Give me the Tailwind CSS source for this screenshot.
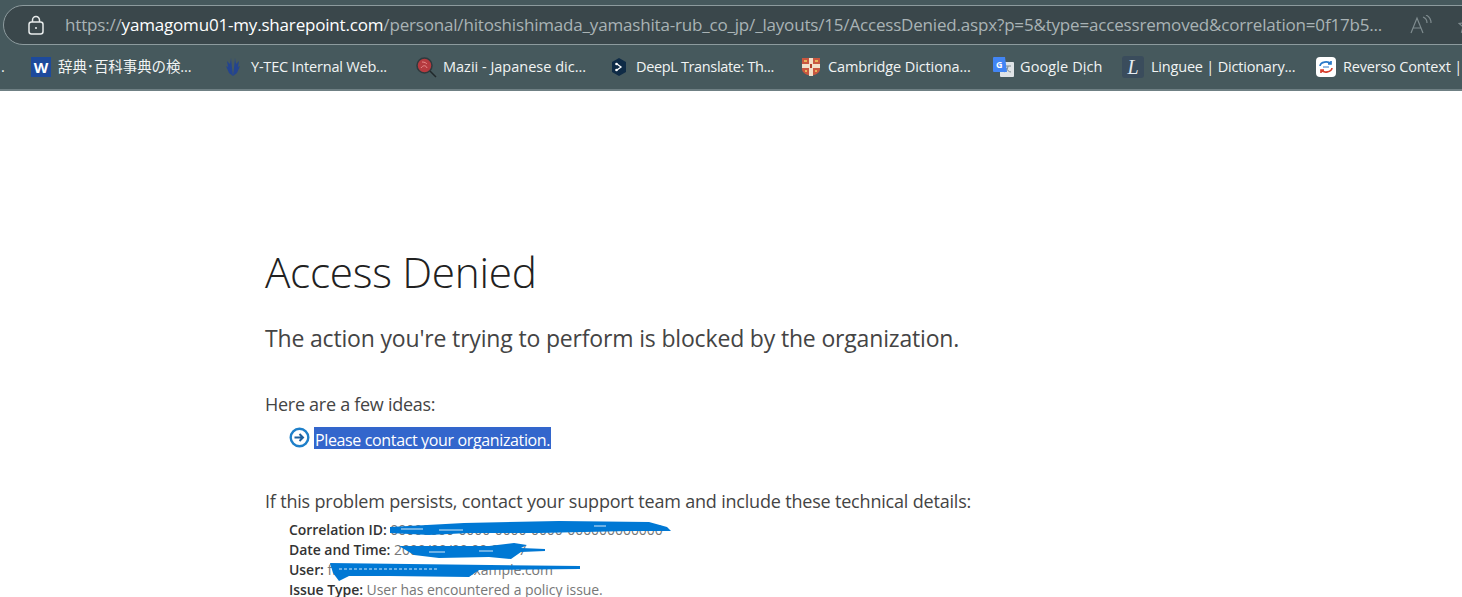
<!doctype html>
<html>
<head>
<meta charset="utf-8"/>
<script src="https://cdn.jsdelivr.net/npm/@tailwindcss/browser@4"></script>
</head>
<body class="bg-white overflow-hidden h-[597px] font-['Open_Sans','Noto_Sans_CJK_JP',sans-serif]">
	<!-- browser toolbar -->
	<div class="h-[91px] bg-[#46595d] border-b-2 border-[#6f8084] pt-[5px] overflow-hidden">
		<div class="h-[40px] ml-[3px] w-[1480px] rounded-l-[20px] border border-[#8d9b9e] bg-[#3a474b] flex items-center relative">
			<svg class="ml-[23px] w-[18px] h-[20px]" viewBox="0 0 18 20" fill="none" stroke="#e8ecec" stroke-width="1.5">
				<rect x="2" y="7" width="14" height="12" rx="2.5"/>
				<path d="M5.5 7V5a3.5 3.5 0 0 1 7 0v2"/>
				<circle cx="9" cy="13" r="1" fill="#e8ecec" stroke="none"/>
			</svg>
			<div class="ml-[20px] text-[17px] tracking-[-0.18px] whitespace-nowrap text-[#a9b3b5]">https://<span class="text-white">yamagomu01-my.sharepoint.com</span>/personal/hitoshishimada_yamashita-rub_co_jp/_layouts/15/AccessDenied.aspx?p=5&amp;type=accessremoved&amp;correlation=0f17b5...</div>
			<!-- read aloud + favourite star -->
			<svg class="absolute left-[1406px] top-[9px] w-[22px] h-[20px]" viewBox="0 0 22 20" fill="none" stroke="#7f8c8f" stroke-width="1.2">
				<path d="M1 18L7 3l6 15M3.2 13h7.6"/>
				<path d="M13 2c2.5 1 4 3 4 6M16 0c3 1.500 5 4.500 5 8"/>
			</svg>
			<svg class="absolute left-[1454px] top-[11px] w-[16px] h-[16px]" viewBox="0 0 16 16" fill="none" stroke="#7f8c8f" stroke-width="1.2"><path d="M8 1l2 5 5 .4-4 3.400 1.300 5.200L8 12l-4.300 3L5 9.800 1 6.400 6 6z"/></svg>
		</div>
		<div class="flex items-center h-[44px] text-[14.500px] tracking-[-0.2px] text-[#f1f4f4] whitespace-nowrap">
			<span class="w-[31px] shrink-0 pl-[1px]">.</span>
			<div class="flex items-center shrink-0 w-[194px]">
				<div class="w-[20px] h-[20px] bg-[#1d4a9c] text-white text-[15px] font-bold flex items-center justify-center">W</div>
				<span class="ml-[7px] text-[14.500px] tracking-[-0.1px]">辞典･百科事典の検...</span>
			</div>
			<div class="flex items-center shrink-0 w-[190px]">
				<svg class="w-[16px] h-[20px]" viewBox="0 0 16 20" fill="#24448f"><path d="M6 1l1 10 1 8-4-3-3-7 2 1-1-6 3 3zM10 1L9 11l-1 8 4-3 3-7-2 1 1-6-3 3z"/></svg>
				<span class="ml-[10px]">Y-TEC Internal Web...</span>
			</div>
			<div class="flex items-center shrink-0 w-[195px]">
				<svg class="w-[22px] h-[22px]" viewBox="0 0 22 22" fill="none"><circle cx="9.500" cy="9.500" r="7.500" fill="#b53a3f" stroke="#2f3a3e" stroke-width="1.500"/><path d="M7 6c3 0 4 1 5 2M6 12c2-3 5-3 6 0" stroke="#e88a8a"/><path d="M15 15l6 6" stroke="#20282b" stroke-width="1.500"/></svg>
				<span class="ml-[6px] tracking-[0px]">Mazii - Japanese dic...</span>
			</div>
			<div class="flex items-center shrink-0 w-[192px]">
				<svg class="w-[18px] h-[20px]" viewBox="0 0 18 20"><path d="M9 1l7 4v10l-7 4-7-4V5z" fill="#0f2b46"/><path d="M7 7l4 3-4 3" fill="none" stroke="#fff" stroke-width="1.300"/><circle cx="6.500" cy="7" r="1.300" fill="#fff"/><circle cx="6.500" cy="13" r="1.300" fill="#fff"/></svg>
				<span class="ml-[8px] tracking-[-0.35px]">DeepL Translate: Th...</span>
			</div>
			<div class="flex items-center shrink-0 w-[191px]">
				<svg class="w-[18px] h-[20px]" viewBox="0 0 18 20"><path d="M0 1h18v11c0 4-5 6-9 7-4-1-9-3-9-7z" fill="#c9573f"/><path d="M7 1h4v18H7zM0 7h18v4H0z" fill="#f2dfc8"/><path d="M8 7h2v4H8z" fill="#b0402c"/><path d="M2 3h3v2H2zM13 3h3v2h-3zM3 13h2v2H3zM13 13h2v2h-2z" fill="#e9b25a"/></svg>
				<span class="ml-[8px] tracking-[-0.1px]">Cambridge Dictiona...</span>
			</div>
			<div class="flex items-center shrink-0 w-[129px]">
				<svg class="w-[21px] h-[21px]" viewBox="0 0 21 21"><rect x="7" y="5" width="14" height="15" rx="1" fill="#dfe3e6"/><path d="M12 9h6M15 9c0 3-2 5-4 6M13 11c1 2 3 4 5 4" fill="none" stroke="#7d8a90"/><path d="M1 0h11l2 15H1a1 1 0 0 1-1-1V1a1 1 0 0 1 1-1z" fill="#4285f4"/><text x="3" y="11" font-size="9" font-weight="700" fill="#fff">G</text></svg>
				<span class="ml-[6px] tracking-[0.1px]">Google Dịch</span>
			</div>
			<div class="flex items-center shrink-0 w-[194px]">
				<div class="w-[22px] h-[22px] bg-[#3a4c5c] rounded-[3px] flex items-center justify-center text-[20px] leading-none font-['Liberation_Serif',serif] italic text-[#e6ecf2]">L</div>
				<span class="ml-[7px]">Linguee | Dictionary...</span>
			</div>
			<div class="flex items-center shrink-0">
				<svg class="w-[20px] h-[20px]" viewBox="0 0 20 20" fill="none"><rect width="20" height="20" rx="4" fill="#fff"/><path d="M4 9a6 4.500 0 0 1 11-2M15 4v3h-3" stroke="#2a79c9" stroke-width="1.700"/><path d="M16 11a6 4.500 0 0 1-11 2M5 16v-3h3" stroke="#d8402f" stroke-width="1.700"/><path d="M7 10h6" stroke="#2a79c9"/></svg>
				<span class="ml-[7px]">Reverso Context | T</span>
			</div>
		</div>
	</div>

	<!-- page -->
	<div class="pl-[265px] text-[#333] relative">
		<h1 class="mt-[150px] text-[42.300px] leading-[62px] font-light tracking-[-0.28px] text-[#212121]">Access Denied</h1>
		<p class="mt-[19px] text-[23px] leading-[32px] tracking-[-0.17px] text-[#444]">The action you're trying to perform is blocked by the organization.</p>
		<p class="mt-[38px] text-[18px] leading-[24px] tracking-[-0.28px] text-[#444]">Here are a few ideas:</p>
		<div class="mt-[10px] ml-[24px] flex items-start">
			<svg class="w-[21px] h-[21px] mt-[1px]" viewBox="0 0 21 21" fill="none"><circle cx="10.500" cy="10.500" r="8.800" stroke="#1e7fc9" stroke-width="2.400"/><path d="M5.500 10.500h8M10.500 7l3.500 3.500-3.500 3.500" stroke="#1e5f9c" stroke-width="2"/></svg>
			<span class="ml-[4px] mt-[1px] pt-[5px] bg-[#3366cc] text-white text-[16px] leading-[17px] tracking-[-0.36px] px-[1px]">Please contact your organization.</span>
		</div>
		<p class="mt-[40px] text-[18px] leading-[24px] tracking-[-0.19px] text-[#444]">If this problem persists, contact your support team and include these technical details:</p>
		<div class="relative mt-[7px] ml-[24px] text-[14px] leading-[20px] tracking-[-0.05px] text-[#777]">
			<p class="whitespace-nowrap"><b class="font-semibold text-[#333]">Correlation ID:</b> 00000000-0000-0000-0000-000000000000</p>
			<p class="whitespace-nowrap"><b class="font-semibold text-[#333]">Date and Time:</b> 2000/00/00 00:00:07</p>
			<p class="whitespace-nowrap"><b class="font-semibold text-[#333]">User:</b> firstname.lastname@example.com</p>
			<p class="whitespace-nowrap"><b class="font-semibold text-[#333]">Issue Type:</b> User has encountered a policy issue.</p>
			<!-- blue scribbles over the redacted values -->
			<svg class="absolute left-0 top-0 w-[400px] h-[70px]" viewBox="0 0 400 70" fill="#0078d4">
				<path d="M101 7L175 3 270 1 360 2 378 7 382 11 340 11 250 13 180 13 140 15 101 13z"/>
				<path d="M112 9h22M150 10h24M305 6h12" fill="none" stroke="#d6e8f7"/>
				<path d="M110 26L200 26 225 23 238 25 232 28 256 29 256 31 232 32 222 39 200 37 150 38 125 35z"/>
				<path d="M140 32h16M190 31h14" fill="none" stroke="#d6e8f7"/>
				<path d="M41 43L120 44 291 46 291 49 190 50 180 57 100 56 60 56 50 61 44 53z"/>
				<path d="M50 49h100" fill="none" stroke="#d6e8f7" stroke-dasharray="3 2"/>
			</svg>
		</div>
	</div>
</body>
</html>
